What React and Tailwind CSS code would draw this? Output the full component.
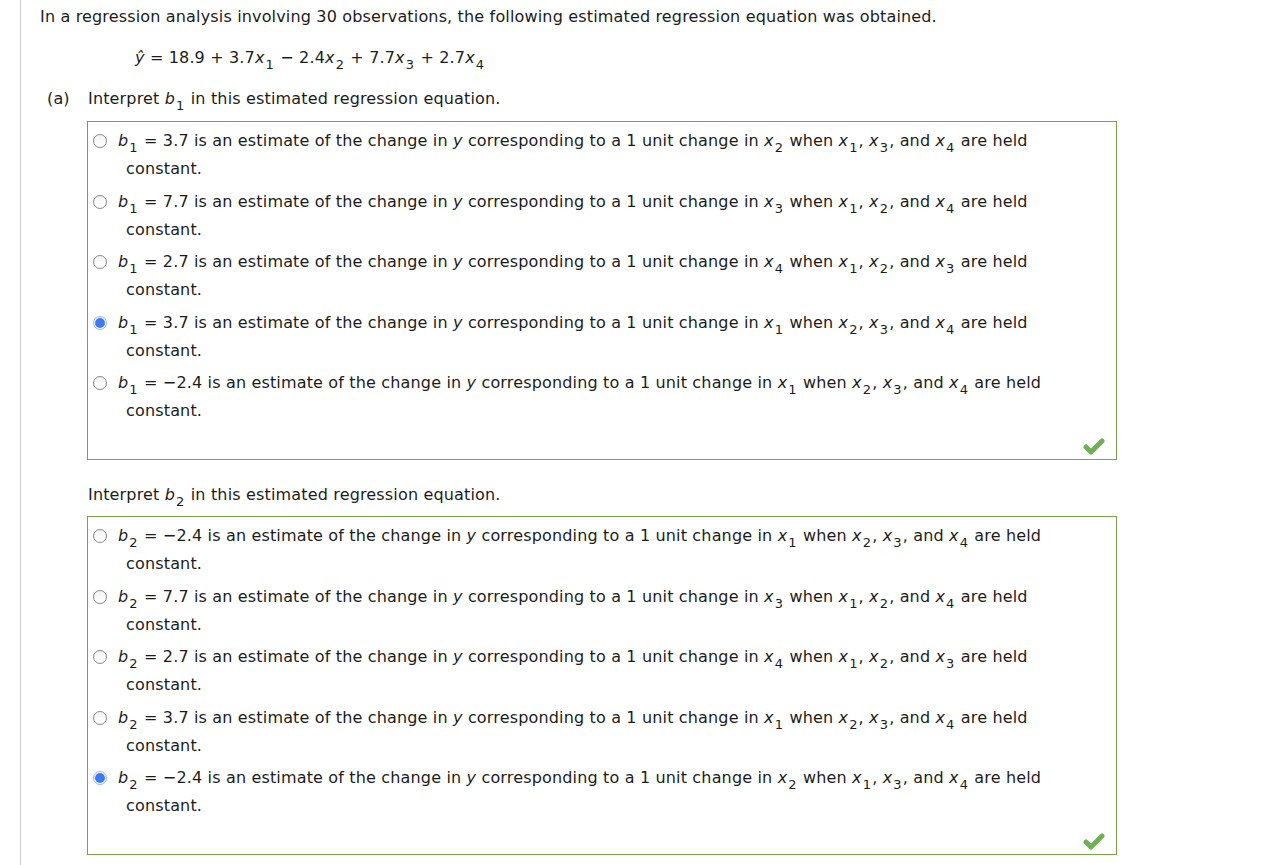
import React from "react";

const V = ({ children }) => <i className="italic">{children}</i>;
const Sub = ({ children }) => (
  <span className="ml-[1px] mr-[1px] align-[-6px] text-[13px] leading-none">{children}</span>
);

function Radio({ selected }) {
  if (selected) {
    return (
      <span className="flex h-[14px] w-[14px] items-center justify-center rounded-full border border-[#8fb4f8] bg-white">
        <span className="h-[10px] w-[10px] rounded-full bg-[#3d7af2]" />
      </span>
    );
  }
  return (
    <span className="block h-[14px] w-[14px] rounded-full border border-[#8a8a8a] bg-gradient-to-b from-[#f2f2f2] to-white" />
  );
}

function Option({ b, val, x, others, selected }) {
  return (
    <div className="flex h-[60.5px]">
      <div className="flex h-[28px] w-[30px] items-center pl-[5px]">
        <Radio selected={selected} />
      </div>
      <div>
        <div className="h-[28px] whitespace-nowrap leading-[28px]">
          <V>b</V>
          <Sub>{b}</Sub> = {val} is an estimate of the change in <V>y</V> corresponding to a 1 unit
          change in <V>x</V>
          <Sub>{x}</Sub> when <V>x</V>
          <Sub>{others[0]}</Sub>, <V>x</V>
          <Sub>{others[1]}</Sub>, and <V>x</V>
          <Sub>{others[2]}</Sub> are held
        </div>
        <div className="h-[28px] pl-[8px] leading-[28px]">constant.</div>
      </div>
    </div>
  );
}

function Check() {
  return (
    <svg width="22" height="18" viewBox="0 0 22 18">
      <polyline
        points="3,10 8,15 19,4"
        fill="none"
        stroke="#6fb052"
        strokeWidth="5"
        strokeLinecap="round"
        strokeLinejoin="round"
      />
    </svg>
  );
}

function Box({ options }) {
  return (
    <div className="ml-[47px] w-[1030px] border border-[#78a34a] pt-[5px]">
      {options.map((o, i) => (
        <Option key={i} {...o} />
      ))}
      <div className="flex h-[29.5px] items-start justify-end pr-[11px] pt-[7px]">
        <Check />
      </div>
    </div>
  );
}

export default function App() {
  const opts1 = [
    { b: "1", val: "3.7", x: "2", others: ["1", "3", "4"] },
    { b: "1", val: "7.7", x: "3", others: ["1", "2", "4"] },
    { b: "1", val: "2.7", x: "4", others: ["1", "2", "3"] },
    { b: "1", val: "3.7", x: "1", others: ["2", "3", "4"], selected: true },
    { b: "1", val: "\u22122.4", x: "1", others: ["2", "3", "4"] },
  ];
  const opts2 = [
    { b: "2", val: "\u22122.4", x: "1", others: ["2", "3", "4"] },
    { b: "2", val: "7.7", x: "3", others: ["1", "2", "4"] },
    { b: "2", val: "2.7", x: "4", others: ["1", "2", "3"] },
    { b: "2", val: "3.7", x: "1", others: ["2", "3", "4"] },
    { b: "2", val: "\u22122.4", x: "2", others: ["1", "3", "4"], selected: true },
  ];
  return (
    <div
      className="min-h-[865px] bg-white pl-[20px] text-[16px] tracking-[0.16px] text-[#1c1c1c]"
      style={{ fontFamily: '"DejaVu Sans", Verdana, sans-serif' }}
    >
      <div className="flex min-h-[865px] flex-col border-l border-[#cccccc] pl-[19px] pt-[7px]">
        <div className="h-[20px] leading-[20px] whitespace-nowrap">
          In a regression analysis involving 30 observations, the following estimated regression
          equation was obtained.
        </div>
        <div className="ml-[95px] mt-[21px] h-[20px] leading-[20px] whitespace-nowrap">
          <V>ŷ</V> = 18.9 + 3.7<V>x</V>
          <Sub>1</Sub> − 2.4<V>x</V>
          <Sub>2</Sub> + 7.7<V>x</V>
          <Sub>3</Sub> + 2.7<V>x</V>
          <Sub>4</Sub>
        </div>
        <div className="mt-[21px] flex h-[20px] leading-[20px] whitespace-nowrap">
          <span className="w-[48px] pl-[7px]">(a)</span>
          <span>
            Interpret <V>b</V>
            <Sub>1</Sub> in this estimated regression equation.
          </span>
        </div>
        <div className="mt-[12px]">
          <Box options={opts1} />
        </div>
        <div className="mb-[11px] ml-[48px] mt-[25px] h-[20px] leading-[20px] whitespace-nowrap">
          Interpret <V>b</V>
          <Sub>2</Sub> in this estimated regression equation.
        </div>
        <Box options={opts2} />
      </div>
    </div>
  );
}
